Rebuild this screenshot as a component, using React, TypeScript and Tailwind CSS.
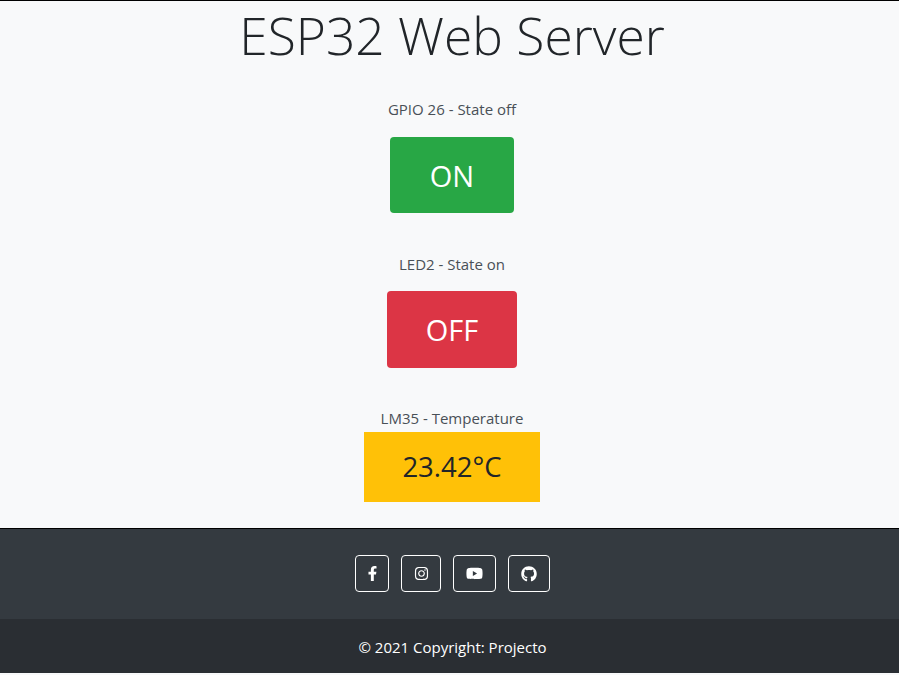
import { FaFacebookF, FaInstagram, FaYoutube, FaGithub } from "react-icons/fa";

const font = { fontFamily: '"Open Sans", "Noto Sans", sans-serif' };

function Social({ w, children }: { w: string; children: React.ReactNode }) {
  return (
    <a className={`flex h-[37px] items-center justify-center rounded border border-white text-white ${w}`}>
      {children}
    </a>
  );
}

export default function App() {
  return (
    <div style={font} className="flex h-[675px] flex-col overflow-hidden bg-[#f8f9fa] text-center">
      <div className="flex h-[528px] flex-col items-center border-t border-black pl-[5px]">
        <h1 className="h-[68px] text-[51.5px] leading-[68px] font-light text-[#212529]">ESP32 Web Server</h1>
        <p className="mt-[29px] h-[22px] text-[15px] leading-[22px] text-[#495057]">GPIO 26 - State off</p>
        <button className="mt-[17px] h-[76px] w-[124px] rounded bg-[#28a745] pt-[1px] text-[29px] text-white">ON</button>
        <p className="mt-[40px] h-[22px] text-[15px] leading-[22px] text-[#495057]">LED2 - State on</p>
        <button className="mt-[16px] h-[77px] w-[130px] rounded bg-[#dc3545] pt-[1px] text-[29px] text-white">OFF</button>
        <p className="mt-[39px] h-[22px] text-[15px] leading-[22px] text-[#495057]">LM35 - Temperature</p>
        <div className="mt-[3px] flex h-[70px] w-[176px] items-center justify-center bg-[#ffc107] text-[27.5px] text-[#212529]">
          23.42°C
        </div>
      </div>
      <footer className="flex flex-col text-white">
        <div className="flex h-[91px] items-center justify-center gap-3 border-t border-black bg-[#343a40] pb-[1px] pl-[6px]">
          <Social w="w-[34px]"><FaFacebookF size={15} /></Social>
          <Social w="w-[40px]"><FaInstagram size={15} /></Social>
          <Social w="w-[43px]"><FaYoutube size={17} /></Social>
          <Social w="w-[42px]"><FaGithub size={16} /></Social>
        </div>
        <div className="flex h-[54px] items-center justify-center bg-[#2a2e33] pt-[2px] pl-[6px] text-[15px]">© 2021 Copyright: Projecto</div>
      </footer>
    </div>
  );
}
